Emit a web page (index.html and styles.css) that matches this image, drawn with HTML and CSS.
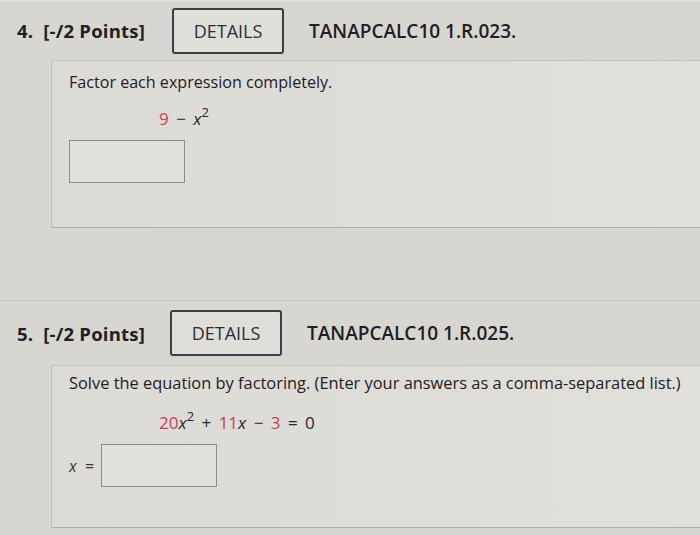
FILE: index.html
```html
<!DOCTYPE html>
<html>
<head>
<meta charset="utf-8">
<link rel="stylesheet" href="styles.css">
</head>
<body>
<div class="page">
  <section class="question q4">
    <div class="qhead">
      <span class="qnum">4.&nbsp; [-/2 Points]</span>
      <span class="details">DETAILS</span>
      <span class="qid">TANAPCALC10 1.R.023.</span>
    </div>
    <div class="qbody body4">
      <p class="prompt">Factor each expression completely.</p>
      <p class="expr"><span class="red">9</span> − <i>x</i><sup>2</sup></p>
      <div class="answer"></div>
    </div>
  </section>
  <section class="question q5">
    <div class="qhead">
      <span class="qnum">5.&nbsp; [-/2 Points]</span>
      <span class="details">DETAILS</span>
      <span class="qid">TANAPCALC10 1.R.025.</span>
    </div>
    <div class="qbody body5">
      <p class="prompt">Solve the equation by factoring. (Enter your answers as a comma-separated list.)</p>
      <p class="expr"><span class="red">20</span><i>x</i><sup>2</sup> + <span class="red">11</span><i>x</i> − <span class="red">3</span> = 0</p>
      <div class="answer-row"><span class="xlabel"><i>x</i> &nbsp;=</span><div class="answer"></div></div>
    </div>
  </section>
</div>
</body>
</html>
```
FILE: styles.css
```css
html, body {
  margin: 0;
  padding: 0;
}
body {
  background: #d8d6d0;
  font-family: "Open Sans", "Liberation Sans", sans-serif;
  color: #1f2024;
  width: 700px;
  height: 535px;
  overflow: hidden;
}
.question.q5 {
  margin-top: 72px;
}
.qhead {
  display: flex;
  align-items: center;
  height: 60px;
  border-top: 1px solid #e4e2dd;
  box-sizing: border-box;
  padding-left: 17px;
  background: #d8d6d0;
}
.q5 .qhead {
  height: 65px;
  border-top: 1px solid #c6c4be;
}
.qnum {
  font-weight: 700;
  font-size: 18.5px;
  letter-spacing: 0.2px;
  width: 155px;
  white-space: nowrap;
}
.q5 .qnum {
  width: 153px;
}
.details {
  display: flex;
  align-items: center;
  justify-content: center;
  width: 108px;
  height: 42px;
  border: 2px solid #3b3e47;
  border-radius: 3px;
  background: #e0ded9;
  font-size: 18px;
  color: #2a2e37;
  margin-right: 25px;
}
.qid {
  font-weight: 600;
  font-size: 19px;
  letter-spacing: 0;
  color: #1f2024;
}
.qbody {
  margin-left: 51px;
  border-left: 1px solid #bdbbb5;
  border-top: 1px solid #c4c2bc;
  border-bottom: 1px solid #b0aea8;
  background: linear-gradient(90deg, #dddbd5 0%, #dfddd7 60%, #e1e0db 100%);
  padding-left: 17px;
  box-sizing: border-box;
}
.body4 {
  height: 168px;
  padding-top: 10px;
}
.body5 {
  height: 163px;
  padding-top: 6px;
}
.prompt {
  margin: 0;
  font-size: 16.1px;
  line-height: 22px;
  color: #1f2024;
}
.body5 .prompt {
  font-size: 16.4px;
}
.expr {
  margin: 15px 0 0 90px;
  font-size: 17px;
  line-height: 22px;
  word-spacing: 3px;
  color: #26272b;
}
.body5 .expr {
  margin-top: 18px;
}
.expr i {
  font-style: italic;
}
.expr sup {
  font-size: 13px;
  line-height: 0;
  vertical-align: 8px;
}
.red {
  color: #c6404e;
}
.answer {
  width: 116px;
  height: 43px;
  border: 1px solid #8c8b87;
  background: #e2e0db;
  margin-top: 10px;
  box-sizing: border-box;
}
.answer-row {
  display: flex;
  align-items: center;
  margin-top: 10px;
}
.xlabel {
  font-size: 16px;
  width: 32px;
  color: #38383c;
  white-space: nowrap;
}
.answer-row .answer {
  margin-top: 0;
}
```
